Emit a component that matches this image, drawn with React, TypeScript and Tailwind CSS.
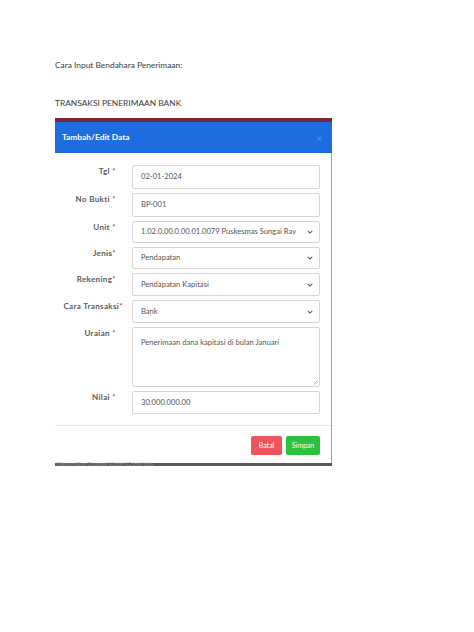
import React from "react";

const Chevron = () => (
  <svg width="6" height="4" viewBox="0 0 10 7" className="shrink-0 ml-[4px]">
    <path d="M1 1.5 L5 5.5 L9 1.5" fill="none" stroke="#555" strokeWidth="1.8" />
  </svg>
);

type Row = {
  label: string;
  star: string;
  value: string;
  kind: "input" | "select" | "textarea";
  h: string;
  shift?: boolean;
};

const rows: Row[] = [
  { label: "Tgl", star: " *", value: "02-01-2024", kind: "input", h: "h-[24px]" },
  { label: "No Bukti", star: " *", value: "BP-001", kind: "input", h: "h-[24px]" },
  { label: "Unit", star: " *", value: "1.02.0.00.0.00.01.0079 Puskesmas Sungai Ray", kind: "select", h: "h-[22px]" },
  { label: "Jenis", star: "*", value: "Pendapatan", kind: "select", h: "h-[22px]" },
  { label: "Rekening", star: "*", value: "Pendapatan Kapitasi", kind: "select", h: "h-[23px]" },
  { label: "Cara Transaksi", star: "*", value: "Bank", kind: "select", h: "h-[23px]", shift: true },
  { label: "Uraian", star: " *", value: "Penerimaan dana kapitasi di bulan Januari", kind: "textarea", h: "h-[60px]" },
  { label: "Nilai", star: " *", value: "30.000.000.00", kind: "input", h: "h-[23px]" },
];

export default function App() {
  return (
    <div
      className="w-[474px] h-[632px] bg-white pl-[55px]"
      style={{ fontFamily: "Lato, 'Open Sans', sans-serif" }}
    >
      <div className="pt-[60px] text-[8.4px] leading-[10px] text-[#3a3a3a]">
        Cara Input Bendahara Penerimaan:
      </div>
      <div className="pt-[28px] text-[8.4px] leading-[10px] text-[#3a3a3a]">
        TRANSAKSI PENERIMAAN BANK
      </div>

      <div className="mt-[10px] w-[277px]">
        <div className="h-[4px] bg-[#7a2532]" />
        <div className="h-[31px] bg-[#1d6ce0] flex items-center justify-between pl-[7px] pr-[10px]">
          <span className="text-white font-bold text-[8.4px]">Tambah/Edit Data</span>
          <span className="text-[#5f93e6] text-[10px] leading-none">×</span>
        </div>
        <div className="bg-white border-r border-[#a0a0a0]">
          <div className="pt-[12px] pb-[11px] flex flex-col gap-[4px]">
            {rows.map((r) => (
              <div key={r.label} className="flex">
                <div className="w-[61px] shrink-0 text-right">
                  <span
                    className={`block whitespace-nowrap font-bold text-[8px] leading-[12px] tracking-[0.35px] text-[#5a5a5a] ${
                      r.shift ? "-mr-[7px]" : ""
                    }`}
                  >
                    {r.label}
                    <span className="text-[#e0404a]">{r.star}</span>
                  </span>
                </div>
                <div
                  className={`ml-[16px] w-[188px] ${r.h} border border-[#d6d6d6] rounded-[2px] bg-white flex ${
                    r.kind === "textarea" ? "items-start pt-[9px] relative" : "items-center"
                  } pl-[8px] pr-[6px] text-[7.6px] text-[#555]`}
                >
                  <span className="flex-1 whitespace-nowrap overflow-hidden">{r.value}</span>
                  {r.kind === "select" && <Chevron />}
                  {r.kind === "textarea" && (
                    <svg width="5" height="5" viewBox="0 0 5 5" className="absolute right-[1px] bottom-[1px]">
                      <path d="M4.5 0.5 L0.5 4.5 M4.5 2.5 L2.5 4.5" stroke="#999" strokeWidth="0.7" />
                    </svg>
                  )}
                </div>
              </div>
            ))}
          </div>
          <div className="border-t border-[#e6e6e6] h-[38px] flex items-center justify-end gap-[4px] pr-[11px] pt-[1px]">
            <div className="w-[31px] h-[19px] rounded-[2px] bg-[#f0535c] text-white text-[7px] flex items-center justify-center">
              Batal
            </div>
            <div className="w-[34px] h-[19px] rounded-[2px] bg-[#2cc23e] text-white text-[7px] flex items-center justify-center">
              Simpan
            </div>
          </div>
        </div>
        <div className="h-[3px] bg-[#5a5a5a] flex items-center">
          <span className="pl-[2px] text-[5px] leading-[5px] text-[#8a8a8a] whitespace-nowrap">
            Menampilkan 1 sampai 10 dari 12 total data
          </span>
        </div>
      </div>
    </div>
  );
}
